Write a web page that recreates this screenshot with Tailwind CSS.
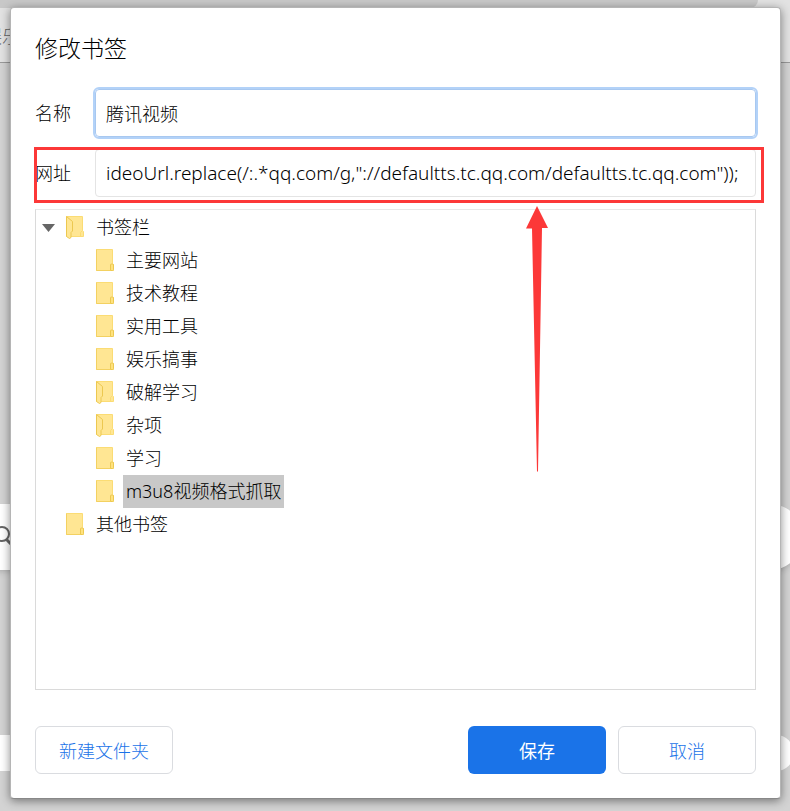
<!DOCTYPE html>
<html lang="zh-CN">
<head>
<meta charset="utf-8">
<meta name="viewport" content="width=device-width, initial-scale=1">
<title>修改书签</title>
<script src="https://cdn.jsdelivr.net/npm/@tailwindcss/browser@4"></script>
</head>
<body class="relative min-h-screen overflow-hidden bg-[#d3d3d3] text-lg font-light text-black font-['Noto_Sans','Noto_Sans_CJK_SC',sans-serif]">

<svg class="hidden" aria-hidden="true">
  <symbol id="folder" viewBox="0 0 20 24">
    <path d="M1.500 1.500H17.500V15.500L18.500 16.500V22.500H1.500Z" fill="#ffe693" stroke="#fbdc74" stroke-linejoin="round"/>
    <path d="M1.500 1.500V22.500H15" fill="none" stroke="#f3d161"/>
    <path d="M15.500 22.500V17Q15.500 16 16.500 16H17.500Q18.500 16 18.500 17V21.500Q18.500 22.500 17.500 22.500Z" fill="#ffe27d" stroke="#ecc850"/>
  </symbol>
  <symbol id="folder-open" viewBox="0 0 20 24">
    <path d="M1.500 1.500H17.500V15.500L18.500 16.500V21.500H1.500Z" fill="#ffe693" stroke="#fbdc74" stroke-linejoin="round"/>
    <path d="M15.500 21.500V17.500L17.500 15.500" fill="none" stroke="#fbdc74"/>
    <path d="M1.500 1.500L7.500 6.500V16L6 17.500V22.500L4.500 23.500L1.500 21.500Z" fill="#ffe693" stroke="#ecc850" stroke-linejoin="round"/>
  </symbol>
</svg>

<!-- Page behind the dialog -->
<div class="absolute inset-0" aria-hidden="true">
  <div class="h-2 bg-[#e2e2e2]"><div class="mr-8 h-2 rounded-br-lg bg-[#c8c8c8]"></div></div>
  <div class="relative h-[55px] border-b border-[#999] bg-[#e2e2e2]">
    <span class="absolute -left-4 top-4 text-lg leading-6 text-[#666]">娱乐</span>
  </div>
  <div class="absolute -left-10 -right-[13px] top-[504px] h-[66px] rounded-full bg-white shadow-md"></div>
  <svg class="absolute -left-2 top-[525px] h-5 w-5" viewBox="0 0 20 20" fill="none" stroke="#666" stroke-width="2"><circle cx="10" cy="9" r="7"/><path d="M14 14l6 6" stroke-width="3"/></svg>
  <div class="absolute -left-10 -right-1 top-[735px] h-9 rounded-full bg-white"></div>
</div>

<main role="dialog" aria-labelledby="title" class="relative mr-[9px] ml-[10px] mt-[7px] mb-3 rounded border border-[#b5b5b5] border-b-[#888] bg-white p-6 shadow-[0_2px_10px_rgba(0,0,0,0.45)]">
  <h1 id="title" class="text-[23px] leading-8">修改书签</h1>

  <form>
    <div class="mt-[25px] flex items-center">
      <label for="name" class="w-[60px] shrink-0">名称</label>
      <input id="name" type="text" value="腾讯视频" class="h-12 min-w-0 grow rounded border border-[#a8c8f0] px-[10px] outline-2 outline-[#b3d2f8]">
    </div>
    <div class="relative mt-3 flex items-center">
      <label for="url" class="w-[60px] shrink-0">网址</label>
      <input id="url" type="text" value="ideoUrl.replace(/:.*qq.com/g,&quot;://defaultts.tc.qq.com/defaultts.tc.qq.com&quot;));" class="h-12 min-w-0 grow rounded border border-[#e4e4e4] px-[10px] text-[19px] outline-none">
      <div class="pointer-events-none absolute -left-px -right-2 -top-0.5 -bottom-1.5 border-3 border-[#fc3838]"></div>
    </div>

    <div class="relative mt-3 min-h-[481px] border border-[#dadada] border-t-[#e8e8e8] pt-px">
      <ul role="tree" aria-label="文件夹" class="leading-[33px]">
        <li role="treeitem" aria-expanded="true">
          <div class="flex items-center pl-[6px]"><svg class="mr-[10px] h-2 w-[13px]" viewBox="0 0 13 8"><path d="M0 0H13L6.500 8Z" fill="#666"/></svg><svg class="mb-0.5 h-6 w-5"><use href="#folder-open"/></svg><span class="ml-2 px-[3px]">书签栏</span></div>
          <ul role="group" class="pl-[59px]">
            <li role="treeitem" class="flex items-center"><svg class="mb-0.5 h-6 w-5"><use href="#folder"/></svg><span class="ml-2 px-[3px]">主要网站</span></li>
            <li role="treeitem" class="flex items-center"><svg class="mb-0.5 h-6 w-5"><use href="#folder"/></svg><span class="ml-2 px-[3px]">技术教程</span></li>
            <li role="treeitem" class="flex items-center"><svg class="mb-0.5 h-6 w-5"><use href="#folder"/></svg><span class="ml-2 px-[3px]">实用工具</span></li>
            <li role="treeitem" class="flex items-center"><svg class="mb-0.5 h-6 w-5"><use href="#folder"/></svg><span class="ml-2 px-[3px]">娱乐搞事</span></li>
            <li role="treeitem" class="flex items-center"><svg class="mb-0.5 h-6 w-5"><use href="#folder-open"/></svg><span class="ml-2 px-[3px]">破解学习</span></li>
            <li role="treeitem" class="flex items-center"><svg class="mb-0.5 h-6 w-5"><use href="#folder-open"/></svg><span class="ml-2 px-[3px]">杂项</span></li>
            <li role="treeitem" class="flex items-center"><svg class="mb-0.5 h-6 w-5"><use href="#folder"/></svg><span class="ml-2 px-[3px]">学习</span></li>
            <li role="treeitem" aria-selected="true" class="flex items-center"><svg class="mb-0.5 h-6 w-5"><use href="#folder"/></svg><span class="ml-2 bg-[#c8c8c8] px-[3px]">m3u8视频格式抓取</span></li>
          </ul>
        </li>
        <li role="treeitem" class="flex items-center pl-[29px]"><svg class="mb-0.5 h-6 w-5"><use href="#folder"/></svg><span class="ml-2 px-[3px]">其他书签</span></li>
      </ul>
      <!-- Arrow pointing at the URL field -->
      <svg class="pointer-events-none absolute -top-1 right-[206px] h-[266px] w-[24px]" viewBox="0 0 24 266" fill="#fc3838" aria-hidden="true"><path d="M12 0L23 22H17L13 265.500H12L7 22.500H1Z"/></svg>
    </div>

    <div class="mt-9 flex gap-3">
      <button type="button" class="mr-auto h-12 w-[138px] rounded-md border border-[#dadce0] pt-px text-[#1a73e8]">新建文件夹</button>
      <button type="submit" class="h-12 w-[138px] rounded-md bg-[#1a73e8] pt-px font-normal text-white">保存</button>
      <button type="button" class="h-12 w-[138px] rounded-md border border-[#dadce0] pt-px text-[#1a73e8]">取消</button>
    </div>
  </form>
</main>
</body>
</html>
